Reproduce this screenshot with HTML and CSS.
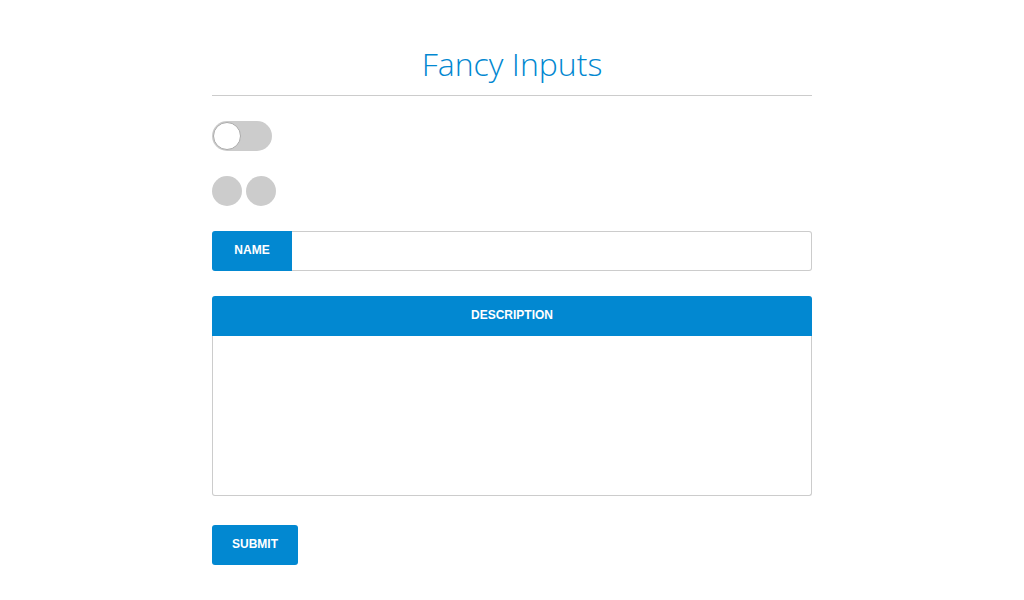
FILE: index.html
```html
<!DOCTYPE html>
<html lang="en">
<head>
    <meta charset="UTF-8">
    <meta name="viewport" content="width=device-width, initial-scale=1.0">
    <title>Fancy Inputs</title>
    <link rel="stylesheet" href="styles.css">
</head>
<body>
    <div class="container">
        <h1 class="title">Fancy Inputs</h1>

        <!-- Switch -->
        <label class="switch">
            <input type="checkbox">
            <span class="knob"></span>
        </label>

        <!-- Radio pair -->
        <div class="dots">
            <span class="dot"></span>
            <span class="dot"></span>
        </div>

        <!-- Labelled text input -->
        <div class="field">
            <span class="field-label">NAME</span>
            <input class="field-input" type="text">
        </div>

        <!-- Labelled textarea -->
        <div class="area">
            <div class="area-label">DESCRIPTION</div>
            <textarea class="area-input"></textarea>
        </div>

        <button class="submit">SUBMIT</button>
    </div>
</body>
</html>
```

FILE: styles.css
```css
body {
    margin: 0;
    padding: 0;
    background-color: #ffffff;
    font-family: "Liberation Sans", Arial, sans-serif;
}
.container {
    width: 600px;
    margin: 0 auto;
    padding-top: 42px;
    display: flex;
    flex-direction: column;
    align-items: flex-start;
    gap: 25px;
}
.title {
    align-self: stretch;
    margin: 0;
    padding-bottom: 10px;
    border-bottom: 1px solid #cccccc;
    font-family: "Open Sans", sans-serif;
    font-weight: 300;
    font-size: 32px;
    color: #0288d1;
    text-align: center;
}
.switch {
    position: relative;
    display: block;
    width: 60px;
    height: 30px;
    border-radius: 15px;
    background-color: #cccccc;
    cursor: pointer;
}
.switch input {
    display: none;
}
.knob {
    position: absolute;
    top: 1px;
    left: 1px;
    width: 26px;
    height: 26px;
    border-radius: 50%;
    background-color: #ffffff;
    border: 1px solid #aaaaaa;
}
.dots {
    display: flex;
    gap: 4px;
}
.dot {
    width: 30px;
    height: 30px;
    border-radius: 50%;
    background-color: #cccccc;
}
.field {
    align-self: stretch;
    display: flex;
    height: 40px;
}
.field-label {
    width: 80px;
    flex-shrink: 0;
    box-sizing: border-box;
    padding-bottom: 2px;
    display: flex;
    align-items: center;
    justify-content: center;
    background-color: #0288d1;
    color: #ffffff;
    font-size: 12px;
    font-weight: bold;
    border-radius: 3px 0 0 3px;
}
.field-input {
    flex: 1;
    margin: 0;
    padding: 0 10px;
    border: 1px solid #cccccc;
    border-left: none;
    border-radius: 0 3px 3px 0;
    outline: none;
}
.area {
    align-self: stretch;
    display: flex;
    flex-direction: column;
    height: 200px;
}
.area-label {
    height: 40px;
    flex-shrink: 0;
    box-sizing: border-box;
    padding-bottom: 2px;
    display: flex;
    align-items: center;
    justify-content: center;
    background-color: #0288d1;
    color: #ffffff;
    font-size: 12px;
    font-weight: bold;
    border-radius: 3px 3px 0 0;
}
.area-input {
    flex: 1;
    margin: 0;
    padding: 10px;
    border: 1px solid #cccccc;
    border-top: none;
    border-radius: 0 0 3px 3px;
    resize: none;
    outline: none;
}
.submit {
    margin-top: 4px;
    width: 86px;
    height: 40px;
    padding: 0 0 2px;
    border: none;
    border-radius: 3px;
    background-color: #0288d1;
    color: #ffffff;
    font-family: "Liberation Sans", Arial, sans-serif;
    font-size: 12px;
    font-weight: bold;
    cursor: pointer;
}
```
